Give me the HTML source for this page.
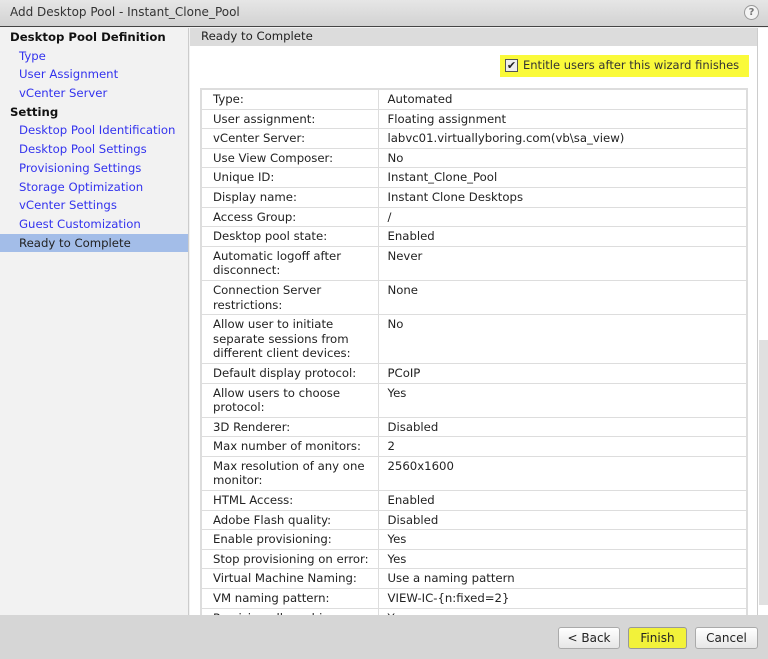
<!DOCTYPE html>
<html><head><meta charset="utf-8"><style>
*{margin:0;padding:0;box-sizing:border-box}
body{width:768px;height:659px;overflow:hidden;font-family:"DejaVu Sans",Verdana,sans-serif;font-size:11.7px;color:#222;background:#f2f2f2;position:relative}
.title{position:absolute;left:0;top:0;width:768px;height:27px;background:linear-gradient(#e6e6e6,#d2d2d2);border-bottom:1px solid #444;font-size:12px;color:#333;padding:5px 0 0 10px}
.help{position:absolute;right:9px;top:5px;width:15px;height:15px;border-radius:50%;border:1px solid #999;background:#f4f4f4;font-size:10px;text-align:center;line-height:13px;color:#777;font-weight:bold}
.left{position:absolute;left:0;top:28px;width:189px;height:587px;background:#f2f2f2;border-right:1px solid #ccc}
.left div{height:18.7px;line-height:18.7px;padding-left:19px;color:#3333ee;white-space:nowrap}
.left div.h{padding-left:10px;color:#111;font-weight:bold}
.left div.sel{background:#a3bde8;color:#222}
.hdr{position:absolute;left:190px;top:28px;width:567px;height:18px;background:#dcdcdc;padding:1px 0 0 11px;font-size:11.7px;color:#222}
.content{position:absolute;left:190px;top:46px;width:567px;height:569px;background:#fff;overflow:hidden}
.ent{position:absolute;left:310px;top:9px;width:249px;height:22px;background:#fafa3a;font-size:11.5px;padding:3px 0 0 23px;color:#333;white-space:nowrap}
.cb{position:absolute;left:5px;top:4px;width:13px;height:13px;border:1px solid #555;background:#eee;font-size:11px;line-height:11px;text-align:center;color:#222}
table{position:absolute;left:10px;top:42px;width:548px;border-collapse:collapse;border:2px solid #ddd}
td{border:1px solid #ddd;padding:2px 0 2px 11px;line-height:14.6px;vertical-align:top;font-size:11.7px;color:#222;white-space:nowrap}
td:first-child{width:177px}
td:last-child{padding-left:9px}
.sb{position:absolute;left:757px;top:28px;width:11px;height:587px;background:#fff;border-left:1px solid #ccc}
.thumb{position:absolute;left:1px;top:312px;width:10px;height:265px;background:#e0e0e0}
.foot{position:absolute;left:0;top:615px;width:768px;height:44px;background:#d6d6d6}
.btn{position:absolute;top:12px;height:22px;border:1px solid #aaa;border-radius:3px;background:linear-gradient(#fff,#e6e6e6);font-size:12px;text-align:center;line-height:20px;color:#222}
</style></head><body>
<div class="title">Add Desktop Pool - Instant_Clone_Pool<div class="help">?</div></div>
<div class="left">
<div class="h">Desktop Pool Definition</div>
<div>Type</div><div>User Assignment</div><div>vCenter Server</div>
<div class="h">Setting</div>
<div>Desktop Pool Identification</div><div>Desktop Pool Settings</div><div>Provisioning Settings</div><div>Storage Optimization</div><div>vCenter Settings</div><div>Guest Customization</div>
<div class="sel">Ready to Complete</div>
</div>
<div class="hdr">Ready to Complete</div>
<div class="content">
<div class="ent"><div class="cb">✔</div>Entitle users after this wizard finishes</div>
<table>
<tr><td>Type:</td><td>Automated</td></tr>
<tr><td>User assignment:</td><td>Floating assignment</td></tr>
<tr><td>vCenter Server:</td><td>labvc01.virtuallyboring.com(vb\sa_view)</td></tr>
<tr><td>Use View Composer:</td><td>No</td></tr>
<tr><td>Unique ID:</td><td>Instant_Clone_Pool</td></tr>
<tr><td>Display name:</td><td>Instant Clone Desktops</td></tr>
<tr><td>Access Group:</td><td>/</td></tr>
<tr><td>Desktop pool state:</td><td>Enabled</td></tr>
<tr><td>Automatic logoff after<br>disconnect:</td><td>Never</td></tr>
<tr><td>Connection Server<br>restrictions:</td><td>None</td></tr>
<tr><td>Allow user to initiate<br>separate sessions from<br>different client devices:</td><td>No</td></tr>
<tr><td>Default display protocol:</td><td>PCoIP</td></tr>
<tr><td>Allow users to choose<br>protocol:</td><td>Yes</td></tr>
<tr><td>3D Renderer:</td><td>Disabled</td></tr>
<tr><td>Max number of monitors:</td><td>2</td></tr>
<tr><td>Max resolution of any one<br>monitor:</td><td>2560x1600</td></tr>
<tr><td>HTML Access:</td><td>Enabled</td></tr>
<tr><td>Adobe Flash quality:</td><td>Disabled</td></tr>
<tr><td>Enable provisioning:</td><td>Yes</td></tr>
<tr><td>Stop provisioning on error:</td><td>Yes</td></tr>
<tr><td>Virtual Machine Naming:</td><td>Use a naming pattern</td></tr>
<tr><td>VM naming pattern:</td><td>VIEW-IC-{n:fixed=2}</td></tr>
<tr><td>Provision all machines</td><td>Yes</td></tr>
</table>
</div>
<div class="sb"><div class="thumb"></div></div>
<div class="foot">
<div class="btn" style="left:558px;width:62px">&lt; Back</div>
<div class="btn" style="left:628px;width:59px;background:#f2f23a;border-color:#999">Finish</div>
<div class="btn" style="left:695px;width:63px">Cancel</div>
</div>
</body></html>
